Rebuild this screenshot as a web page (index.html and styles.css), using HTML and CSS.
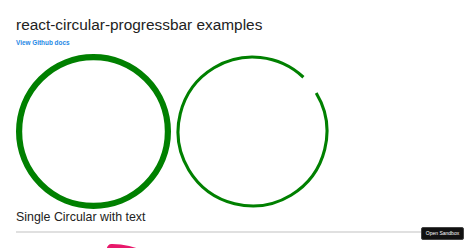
FILE: index.html
```html
<!DOCTYPE html>
<html>
<head>
<meta charset="utf-8">
<link rel="stylesheet" href="styles.css">
</head>
<body>
<div class="page">
  <h1 class="title">react-circular-progressbar examples</h1>
  <a class="docs" href="#">View Github docs</a>
  <div class="row">
    <svg class="pb" viewBox="0 0 100 100">
      <circle cx="50" cy="50" r="48" fill="none" stroke="#008000" stroke-width="4"/>
    </svg>
    <svg class="pb" viewBox="0 0 100 100">
      <circle cx="50" cy="50" r="48" fill="none" stroke="#008000" stroke-width="2" stroke-dasharray="287.9 13.7" transform="rotate(-31.1 50 50)"/>
    </svg>
  </div>
  <h2 class="subtitle">Single Circular with text</h2>
  <hr class="rule">
  <div class="row next">
    <svg class="pb pink" viewBox="0 0 100 100">
      <path d="M50 3 A47 47 0 1 1 20 86" fill="none" stroke="#e8196b" stroke-width="6" stroke-linecap="round"/>
    </svg>
  </div>
</div>
<button class="sandbox">Open Sandbox</button>
</body>
</html>
```

FILE: styles.css
```css
html, body {
  margin: 0;
  padding: 0;
  background: #fff;
  overflow: hidden;
}
.page {
  padding: 0 16px;
  font-family: "Liberation Sans", Arial, sans-serif;
  color: #222;
}
.title {
  margin: 16px 0 0;
  font-size: 15.4px;
  line-height: 18px;
  font-weight: normal;
}
.docs {
  display: block;
  margin-top: 5px;
  font-size: 6.4px;
  line-height: 8px;
  font-weight: bold;
  color: #1e88e5;
  text-decoration: none;
}
.row {
  display: flex;
  gap: 4px;
  margin-top: 7px;
}
.pb {
  display: block;
  width: 155px;
  height: 155px;
}
.subtitle {
  margin: 1px 0 0;
  font-size: 12.4px;
  line-height: 14px;
  font-weight: normal;
}
.rule {
  margin: 7px 0 0;
  border: 0;
  border-top: 2px solid #e0e0e0;
  height: 0;
}
.next {
  margin-top: 11px;
  padding-left: 18px;
}
.sandbox {
  position: fixed;
  right: 10px;
  bottom: 8px;
  width: 43px;
  height: 13px;
  padding: 0;
  border: 1px solid #444;
  border-radius: 2px;
  background: #111;
  color: #fff;
  font-family: "Liberation Sans", Arial, sans-serif;
  font-size: 5px;
  line-height: 11px;
}
```
